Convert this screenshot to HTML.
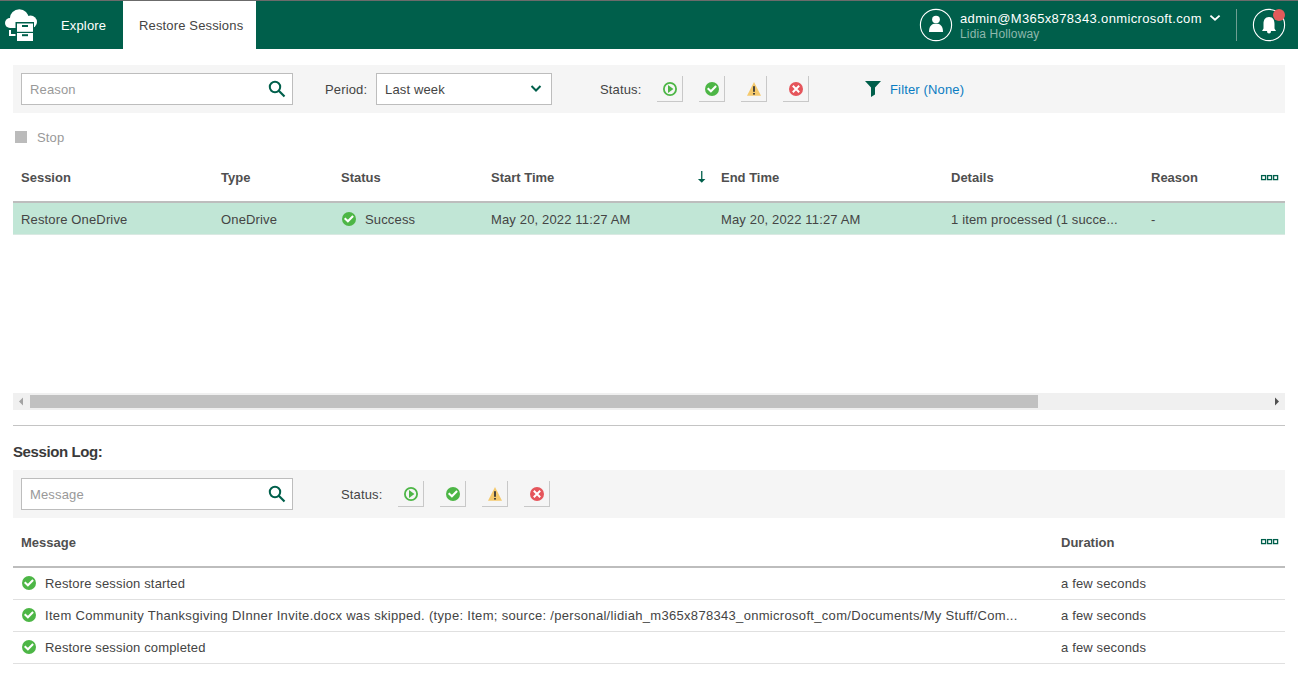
<!DOCTYPE html>
<html><head><meta charset="utf-8">
<style>
*{margin:0;padding:0;box-sizing:border-box}
html,body{width:1298px;height:694px;overflow:hidden;background:#fff}
body{position:relative;font-family:"Liberation Sans",sans-serif;font-size:13px;color:#444}
.a{position:absolute;white-space:nowrap;line-height:18px;letter-spacing:0.15px}
.b{font-weight:bold;color:#4f4f4f;letter-spacing:0}
#topline{position:absolute;left:0;top:0;width:1298px;height:1px;background:#6b6b6b}
#hdr{position:absolute;left:0;top:1px;width:1298px;height:48px;background:#005f4b}
#tab{position:absolute;left:123px;top:1px;width:133px;height:48px;background:#fff}
.bar{position:absolute;left:13px;width:1272px;height:48px;background:#f5f5f5}
.inp{position:absolute;background:#fff;border:1px solid #bdbdbd}
.sbtn{position:absolute;width:26px;height:26px;border-right:1px solid #c8c8c8;border-bottom:1px solid #c8c8c8}
.sbtn svg{position:absolute;left:5px;top:5px}
.hline{position:absolute;left:13px;width:1272px}
</style></head>
<body>
<div id="topline"></div>
<div id="hdr"></div>
<div id="tab"></div>
<!-- logo -->
<svg style="position:absolute;left:0;top:0" width="44" height="48" viewBox="0 0 44 48">
  <g fill="#fff">
    <circle cx="10" cy="23" r="5"/>
    <circle cx="19.3" cy="18.8" r="9.5"/>
    <circle cx="30.5" cy="22" r="6.5"/>
    <rect x="10" y="20" width="21" height="8"/>
  </g>
  <rect x="15.5" y="22" width="18.5" height="20" fill="#005f4b"/>
  <g fill="#fff">
    <rect x="17" y="23.5" width="16" height="8.3"/>
    <rect x="17" y="33" width="16" height="8"/>
    <rect x="9" y="30" width="2" height="6"/>
    <rect x="9" y="34" width="6.5" height="2"/>
  </g>
  <rect x="22" y="25" width="6" height="2" fill="#005f4b"/>
  <rect x="22" y="34.2" width="6" height="2" fill="#005f4b"/>
</svg>
<div class="a" style="left:61px;top:17px;color:#fff">Explore</div>
<div class="a" style="left:139px;top:17px;color:#444">Restore Sessions</div>

<!-- user -->
<svg style="position:absolute;left:919px;top:8px" width="34" height="34" viewBox="0 0 34 34">
  <circle cx="17" cy="17" r="15.6" fill="none" stroke="#fff" stroke-width="1.1"/>
  <ellipse cx="17" cy="11.4" rx="3.9" ry="3.6" fill="#fff"/>
  <path d="M10 24 C10 18.5 12.5 15.6 17 15.6 C21.5 15.6 24 18.5 24 24 Z" fill="#fff"/>
</svg>
<div class="a" style="left:960px;top:10px;color:#fff;letter-spacing:0.36px">admin@M365x878343.onmicrosoft.com</div>
<div class="a" style="left:960px;top:25px;color:#8fb8ad;font-size:12px">Lidia Holloway</div>
<svg style="position:absolute;left:1209px;top:13px" width="12" height="10" viewBox="0 0 12 10">
  <path d="M1.4 2.6 L6 6.7 L10.6 2.6" fill="none" stroke="#fff" stroke-width="1.9"/>
</svg>
<div style="position:absolute;left:1236px;top:9px;width:1px;height:32px;background:#6f9e92"></div>
<svg style="position:absolute;left:1252px;top:8px" width="34" height="34" viewBox="0 0 34 34">
  <circle cx="17" cy="17" r="15.6" fill="none" stroke="#fff" stroke-width="1.1"/>
  <path d="M17 9 C13 9 11.5 12 11.5 16 L11.5 20.5 L10 23 L24 23 L22.5 20.5 L22.5 16 C22.5 12 21 9 17 9 Z" fill="#fff"/>
  <circle cx="17" cy="23.5" r="2" fill="#fff"/>
  <circle cx="27" cy="7" r="6" fill="#e35b5b"/>
</svg>

<!-- filter bar -->
<div class="bar" style="top:65px"></div>
<div class="inp" style="left:21px;top:73px;width:272px;height:32px"></div>
<div class="a" style="left:30px;top:81px;color:#999">Reason</div>
<svg style="position:absolute;left:267px;top:79px" width="20" height="20" viewBox="0 0 20 20">
  <circle cx="8" cy="8" r="5.2" fill="none" stroke="#005f4b" stroke-width="2"/>
  <path d="M11.8 11.8 L17.5 17.5" stroke="#005f4b" stroke-width="2.2"/>
</svg>
<div class="a" style="left:325px;top:81px;color:#444">Period:</div>
<div class="inp" style="left:376px;top:73px;width:176px;height:32px"></div>
<div class="a" style="left:385px;top:81px;color:#444">Last week</div>
<svg style="position:absolute;left:529px;top:83px" width="14" height="12" viewBox="0 0 14 12">
  <path d="M2.5 3 L7 7.5 L11.5 3" fill="none" stroke="#005f4b" stroke-width="2"/>
</svg>
<div class="a" style="left:600px;top:81px;color:#444">Status:</div>

<div class="sbtn" style="left:657px;top:76px"></div>
<div class="sbtn" style="left:699px;top:76px"></div>
<div class="sbtn" style="left:741px;top:76px"></div>
<div class="sbtn" style="left:783px;top:76px"></div>
<svg style="position:absolute;left:662px;top:81px" width="16" height="16" viewBox="0 0 16 16">
  <circle cx="8" cy="8" r="6.1" fill="none" stroke="#4db646" stroke-width="1.8"/>
  <path d="M6 4 L11.4 8 L6 12 Z" fill="#4db646"/>
</svg>
<svg style="position:absolute;left:704px;top:81px" width="16" height="16" viewBox="0 0 16 16">
  <circle cx="8" cy="8" r="7" fill="#4db646"/>
  <path d="M3.7 7.3 L6.9 10.2 L12.1 5.1" fill="none" stroke="#fff" stroke-width="2.1"/>
</svg>
<svg style="position:absolute;left:746px;top:81px" width="16" height="16" viewBox="0 0 16 16">
  <path d="M8 1.1 L15 14.8 L1 14.8 Z" fill="#f5c96c"/>
  <rect x="7.1" y="5.2" width="1.8" height="5.6" fill="#383838"/>
  <rect x="7.1" y="12" width="1.8" height="1.6" fill="#383838"/>
</svg>
<svg style="position:absolute;left:788px;top:81px" width="16" height="16" viewBox="0 0 16 16">
  <circle cx="8" cy="8" r="7" fill="#e5555b"/>
  <path d="M4.8 4.8 L11.2 11.2 M11.2 4.8 L4.8 11.2" stroke="#fff" stroke-width="2"/>
</svg>

<svg style="position:absolute;left:864px;top:80px" width="18" height="18" viewBox="0 0 18 18">
  <path d="M1 1 L17 1 L11 7.5 L11 14.5 L7 17 L7 7.5 Z" fill="#005f4b"/>
</svg>
<div class="a" style="left:890px;top:81px;color:#0a7cc2">Filter (None)</div>

<!-- stop -->
<div style="position:absolute;left:15px;top:131px;width:12px;height:12px;background:#bbb"></div>
<div class="a" style="left:37px;top:129px;color:#999">Stop</div>

<!-- sessions table -->
<div class="a b" style="left:21px;top:169px">Session</div>
<div class="a b" style="left:221px;top:169px">Type</div>
<div class="a b" style="left:341px;top:169px">Status</div>
<div class="a b" style="left:491px;top:169px">Start Time</div>
<svg style="position:absolute;left:697px;top:170px" width="10" height="14" viewBox="0 0 10 14">
  <rect x="4.1" y="1" width="1.3" height="9" fill="#005f4b"/>
  <path d="M0.9 9 L8.4 9 L4.75 12.8 Z" fill="#005f4b"/>
</svg>
<div class="a b" style="left:721px;top:169px">End Time</div>
<div class="a b" style="left:951px;top:169px">Details</div>
<div class="a b" style="left:1151px;top:169px">Reason</div>
<svg style="position:absolute;left:1260px;top:174px" width="20" height="7" viewBox="0 0 20 7">
  <g fill="none" stroke="#005f4b" stroke-width="1.3">
    <rect x="1.6" y="1.6" width="4" height="4"/>
    <rect x="7.6" y="1.6" width="4" height="4"/>
    <rect x="13.6" y="1.6" width="4" height="4"/>
  </g>
</svg>
<div class="hline" style="top:201px;height:2px;background:#bdbdbd"></div>
<div class="hline" style="top:203px;height:31px;background:#c1e6d6"></div><div class="hline" style="top:234px;height:1px;background:#d9e9e2"></div>
<div class="a" style="left:21px;top:211px">Restore OneDrive</div>
<div class="a" style="left:221px;top:211px">OneDrive</div>
<svg style="position:absolute;left:341px;top:211px" width="16" height="16" viewBox="0 0 16 16">
  <circle cx="8" cy="8" r="7" fill="#4db646"/>
  <path d="M3.7 7.3 L6.9 10.2 L12.1 5.1" fill="none" stroke="#fff" stroke-width="2.1"/>
</svg>
<div class="a" style="left:365px;top:211px">Success</div>
<div class="a" style="left:491px;top:211px">May 20, 2022 11:27 AM</div>
<div class="a" style="left:721px;top:211px">May 20, 2022 11:27 AM</div>
<div class="a" style="left:951px;top:211px">1 item processed (1 succe...</div>
<div class="a" style="left:1151px;top:211px">-</div>

<!-- scrollbar -->
<div class="hline" style="top:393px;height:17px;background:#f0f0f0"></div>
<div style="position:absolute;left:30px;top:395px;width:1008px;height:13px;background:#c1c1c1"></div>
<svg style="position:absolute;left:17px;top:396px" width="8" height="11" viewBox="0 0 8 11">
  <path d="M6 1.5 L2 5.5 L6 9.5 Z" fill="#a3a3a3"/>
</svg>
<svg style="position:absolute;left:1273px;top:396px" width="8" height="11" viewBox="0 0 8 11">
  <path d="M2 1.5 L6 5.5 L2 9.5 Z" fill="#505050"/>
</svg>
<div class="hline" style="top:425px;height:1px;background:#c4c4c4"></div>

<!-- session log -->
<div class="a b" style="left:13px;top:443px;font-size:15px;line-height:18px;color:#3a3a3a;letter-spacing:-0.4px">Session Log:</div>
<div class="bar" style="top:470px"></div>
<div class="inp" style="left:21px;top:478px;width:272px;height:32px"></div>
<div class="a" style="left:30px;top:486px;color:#999">Message</div>
<svg style="position:absolute;left:267px;top:484px" width="20" height="20" viewBox="0 0 20 20">
  <circle cx="8" cy="8" r="5.2" fill="none" stroke="#005f4b" stroke-width="2"/>
  <path d="M11.8 11.8 L17.5 17.5" stroke="#005f4b" stroke-width="2.2"/>
</svg>
<div class="a" style="left:341px;top:486px;color:#444">Status:</div>
<div class="sbtn" style="left:398px;top:481px"></div>
<div class="sbtn" style="left:440px;top:481px"></div>
<div class="sbtn" style="left:482px;top:481px"></div>
<div class="sbtn" style="left:524px;top:481px"></div>
<svg style="position:absolute;left:403px;top:486px" width="16" height="16" viewBox="0 0 16 16">
  <circle cx="8" cy="8" r="6.1" fill="none" stroke="#4db646" stroke-width="1.8"/>
  <path d="M6 4 L11.4 8 L6 12 Z" fill="#4db646"/>
</svg>
<svg style="position:absolute;left:445px;top:486px" width="16" height="16" viewBox="0 0 16 16">
  <circle cx="8" cy="8" r="7" fill="#4db646"/>
  <path d="M3.7 7.3 L6.9 10.2 L12.1 5.1" fill="none" stroke="#fff" stroke-width="2.1"/>
</svg>
<svg style="position:absolute;left:487px;top:486px" width="16" height="16" viewBox="0 0 16 16">
  <path d="M8 1.1 L15 14.8 L1 14.8 Z" fill="#f5c96c"/>
  <rect x="7.1" y="5.2" width="1.8" height="5.6" fill="#383838"/>
  <rect x="7.1" y="12" width="1.8" height="1.6" fill="#383838"/>
</svg>
<svg style="position:absolute;left:529px;top:486px" width="16" height="16" viewBox="0 0 16 16">
  <circle cx="8" cy="8" r="7" fill="#e5555b"/>
  <path d="M4.8 4.8 L11.2 11.2 M11.2 4.8 L4.8 11.2" stroke="#fff" stroke-width="2"/>
</svg>

<div class="a b" style="left:21px;top:534px">Message</div>
<div class="a b" style="left:1061px;top:534px">Duration</div>
<svg style="position:absolute;left:1260px;top:538px" width="20" height="7" viewBox="0 0 20 7">
  <g fill="none" stroke="#005f4b" stroke-width="1.3">
    <rect x="1.6" y="1.6" width="4" height="4"/>
    <rect x="7.6" y="1.6" width="4" height="4"/>
    <rect x="13.6" y="1.6" width="4" height="4"/>
  </g>
</svg>
<div class="hline" style="top:566px;height:2px;background:#bdbdbd"></div>

<svg style="position:absolute;left:21px;top:575px" width="16" height="16" viewBox="0 0 16 16">
  <circle cx="8" cy="8" r="7" fill="#4db646"/>
  <path d="M3.7 7.3 L6.9 10.2 L12.1 5.1" fill="none" stroke="#fff" stroke-width="2.1"/>
</svg>
<div class="a" style="left:45px;top:575px">Restore session started</div>
<div class="a" style="left:1061px;top:575px">a few seconds</div>
<div class="hline" style="top:599px;height:1px;background:#e0e0e0"></div>

<svg style="position:absolute;left:21px;top:607px" width="16" height="16" viewBox="0 0 16 16">
  <circle cx="8" cy="8" r="7" fill="#4db646"/>
  <path d="M3.7 7.3 L6.9 10.2 L12.1 5.1" fill="none" stroke="#fff" stroke-width="2.1"/>
</svg>
<div class="a" style="left:45px;top:607px;letter-spacing:0.31px">Item Community Thanksgiving DInner Invite.docx was skipped. (type: Item; source: /personal/lidiah_m365x878343_onmicrosoft_com/Documents/My Stuff/Com...</div>
<div class="a" style="left:1061px;top:607px">a few seconds</div>
<div class="hline" style="top:631px;height:1px;background:#e0e0e0"></div>

<svg style="position:absolute;left:21px;top:639px" width="16" height="16" viewBox="0 0 16 16">
  <circle cx="8" cy="8" r="7" fill="#4db646"/>
  <path d="M3.7 7.3 L6.9 10.2 L12.1 5.1" fill="none" stroke="#fff" stroke-width="2.1"/>
</svg>
<div class="a" style="left:45px;top:639px">Restore session completed</div>
<div class="a" style="left:1061px;top:639px">a few seconds</div>
<div class="hline" style="top:663px;height:1px;background:#e0e0e0"></div>
</body></html>
